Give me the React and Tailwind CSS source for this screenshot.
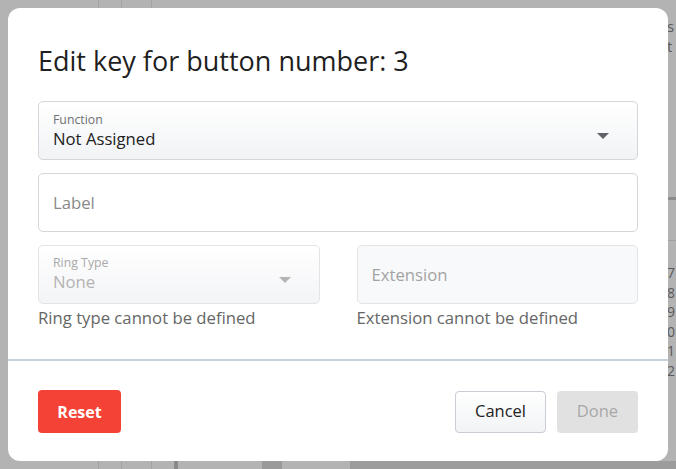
import { useState } from 'react';

const Caret = ({ className }) => (
    <svg width="12" height="6" viewBox="0 0 12 6" className={className}>
        <path d="M0 0 L12 0 L6 6 Z" fill="currentColor" />
    </svg>
);

const App = () => {
    const [label, setLabel] = useState('');

    return (
        <div className="relative w-[676px] h-[469px] overflow-hidden bg-[#b3b3b3] font-['Open_Sans',sans-serif]">
            {/* app behind the overlay */}
            <div className="absolute left-[98px] top-0 h-full w-px bg-[#a3a3a3]" />
            <div className="absolute left-[121px] top-0 h-full w-px bg-[#a3a3a3]" />
            <div className="absolute left-[151px] top-0 h-full w-px bg-[#a3a3a3]" />
            <div className="absolute left-[174px] bottom-0 h-[8px] w-[4px] bg-[#8a8a8a]" />
            <div className="absolute left-[262px] bottom-0 h-[8px] w-[20px] bg-[#9a9a9a]" />
            <div className="absolute left-[350px] bottom-0 h-[8px] w-[326px] bg-[#9c9c9c]" />
            <div className="absolute right-0 top-[197px] h-[3px] w-[12px] bg-[#8c8c8c]" />
            <div className="absolute right-0 top-[240px] h-px w-[12px] bg-[#a0a0a0]" />
            <div className="absolute left-[667px] top-[16px] flex flex-col text-[15px] leading-[20px] text-[#5a5a5a]">
                <span>s</span>
                <span>t</span>
            </div>
            <div className="absolute left-[667px] top-[263px] flex flex-col text-[14px] leading-[19.6px] text-[#5a5a5a]">
                <span>7</span>
                <span>8</span>
                <span>9</span>
                <span>0</span>
                <span>1</span>
                <span>2</span>
            </div>

            <div className="absolute inset-0 p-2">
                <div className="h-full bg-white rounded-[12px] flex flex-col">
                    <div className="px-[30px] pt-[35px]">
                        <h1 className="text-[27px] leading-[36px] text-[#1f1f1f]">Edit key for button number: 3</h1>

                        <div className="mt-[22px] h-[59px] rounded-[5px] border border-[#d3d6db] bg-gradient-to-b from-white to-[#f1f3f5] pl-[14px] pr-[28px] pt-[8px] flex items-center">
                            <div className="flex-1 -mt-[8px]">
                                <div className="text-[12.3px] leading-[16px] text-[#6f6f6f]">Function</div>
                                <div className="text-[16.7px] leading-[22px] text-[#222]">Not Assigned</div>
                            </div>
                            <Caret className="text-[#5f6368] mt-[2px]" />
                        </div>

                        <div className="mt-[13px] h-[59px] rounded-[5px] border border-[#d3d6db] bg-white flex items-center">
                            <input
                                type="text"
                                placeholder="Label"
                                value={label}
                                onChange={(e) => setLabel(e.target.value)}
                                className="w-full px-[14px] text-[16.7px] text-[#222] placeholder:text-[#8a8a8a] outline-none bg-transparent"
                            />
                        </div>

                        <div className="mt-[13px] grid grid-cols-2 gap-x-[37px]">
                            <div>
                                <div className="h-[59px] rounded-[5px] border border-[#e2e4e8] bg-gradient-to-b from-white to-[#f3f4f6] pl-[14px] pr-[28px] flex items-center">
                                    <div className="flex-1 -mt-[2px]">
                                        <div className="text-[12.3px] leading-[16px] text-[#a9a9a9]">Ring Type</div>
                                        <div className="text-[16.7px] leading-[22px] text-[#b3b3b3]">None</div>
                                    </div>
                                    <Caret className="text-[#b5b5b5] mt-[10px]" />
                                </div>
                                <div className="mt-[2px] text-[16.7px] leading-[24px] text-[#666]">Ring type cannot be defined</div>
                            </div>
                            <div>
                                <div className="h-[59px] rounded-[5px] border border-[#e2e4e8] bg-[#f8f9fa] px-[14px] flex items-center">
                                    <span className="text-[16.7px] text-[#a3a3a3]">Extension</span>
                                </div>
                                <div className="mt-[2px] text-[16.7px] leading-[24px] text-[#666]">Extension cannot be defined</div>
                            </div>
                        </div>
                    </div>

                    <div className="mt-[29px] h-[2px] bg-[#c8d0da]" />

                    <div className="px-[30px] pt-[29px] flex items-center">
                        <button className="h-[43px] w-[83px] rounded-[4px] bg-[#f44336] text-white font-bold text-[16px]">Reset</button>
                        <div className="ml-auto flex gap-[11px]">
                            <button className="h-[42px] w-[91px] rounded-[4px] border border-[#c9cdd4] bg-gradient-to-b from-white to-[#f1f3f5] text-[#222] text-[16.5px]">Cancel</button>
                            <button disabled className="h-[42px] w-[81px] rounded-[4px] bg-[#e1e1e1] text-[#a8a8a8] text-[16.5px]">Done</button>
                        </div>
                    </div>
                </div>
            </div>
        </div>
    );
};

export default App;
